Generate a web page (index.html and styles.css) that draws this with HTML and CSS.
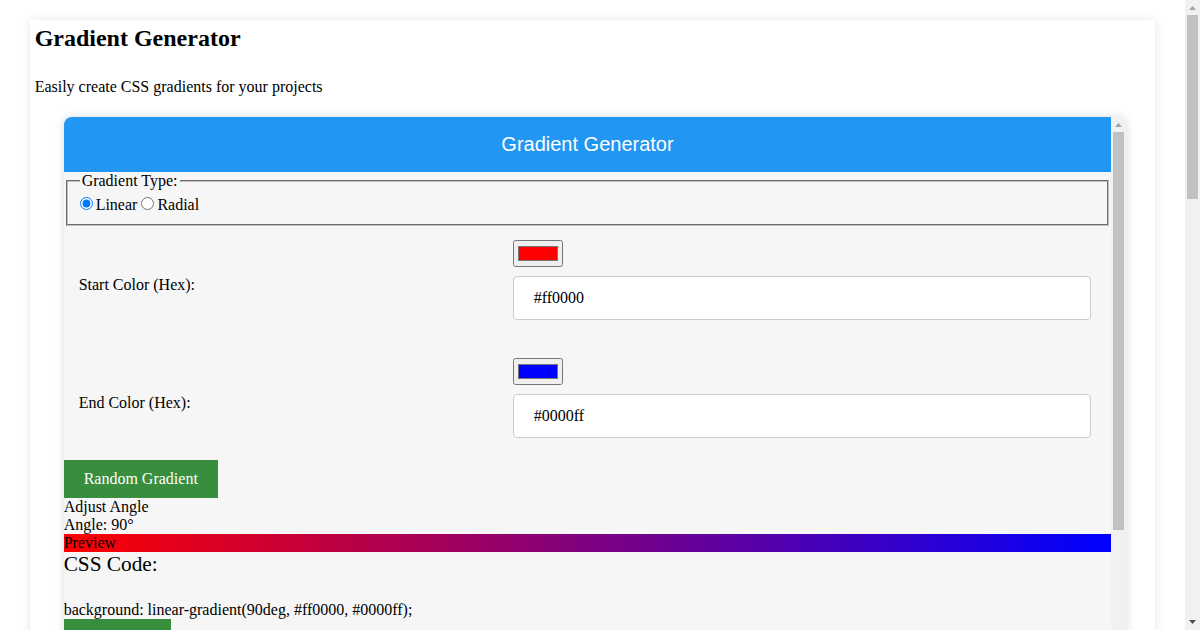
FILE: index.html
```html
<!DOCTYPE html>
<html lang="en">
<head>
<meta charset="utf-8">
<title>Gradient Generator</title>
<link rel="stylesheet" href="styles.css">
</head>
<body>
<div class="window">
  <div class="viewport">
    <div class="page">
      <h2 class="page-title">Gradient Generator</h2>
      <p class="intro">Easily create CSS gradients for your projects</p>

      <div class="app">
        <div class="app-body">
          <div class="app-header">Gradient Generator</div>

          <fieldset class="type-group">
            <legend>Gradient Type:</legend>
            <input type="radio" name="gtype" id="linear" class="radio" checked><label for="linear">Linear</label>
            <input type="radio" name="gtype" id="radial" class="radio"><label for="radial">Radial</label>
          </fieldset>

          <div class="color-row">
            <label class="color-label" for="start-hex">Start Color (Hex):</label>
            <div class="color-inputs">
              <input type="color" class="swatch" value="#ff0000">
              <input type="text" id="start-hex" class="hex-input" value="#ff0000">
            </div>
          </div>

          <div class="color-row">
            <label class="color-label" for="end-hex">End Color (Hex):</label>
            <div class="color-inputs">
              <input type="color" class="swatch" value="#0000ff">
              <input type="text" id="end-hex" class="hex-input" value="#0000ff">
            </div>
          </div>

          <button class="btn">Random Gradient</button>
          <div class="line">Adjust Angle</div>
          <div class="line">Angle: 90°</div>
          <div class="preview" style="background: linear-gradient(90deg, #ff0000, #0000ff);">Preview</div>
          <div class="code-title">CSS Code:</div>
          <p class="code">background: linear-gradient(90deg, #ff0000, #0000ff);</p>
          <button class="btn">Copy CSS</button>
          <div class="code-title saved-title">Saved Gradients:</div>
          <p class="saved-empty">No saved gradients yet.</p>
        </div>

        <div class="vscroll app-scroll" aria-hidden="true">
          <div class="vscroll-btn">
            <svg width="15" height="15" viewBox="0 0 15 15"><polygon points="4,10 11,10 7.5,6" fill="#a3a3a3"/></svg>
          </div>
          <div class="vscroll-track"><div class="vscroll-thumb"></div></div>
        </div>
      </div>

      <section class="guide">
        <h3>How to use</h3>
        <p>Pick a gradient type, choose a start and an end colour, adjust the angle and copy the generated CSS into your stylesheet.</p>
        <h3>About CSS gradients</h3>
        <p>CSS gradients let you display smooth transitions between two or more specified colours without using images.</p>
      </section>
    </div>
  </div>

  <div class="vscroll page-scroll" aria-hidden="true">
    <div class="vscroll-btn">
      <svg width="15" height="15" viewBox="0 0 15 15"><polygon points="4,10 11,10 7.5,6" fill="#a3a3a3"/></svg>
    </div>
    <div class="vscroll-track"><div class="vscroll-thumb"></div></div>
    <div class="vscroll-btn">
      <svg width="15" height="15" viewBox="0 0 15 15"><polygon points="4,5 11,5 7.5,9" fill="#505050"/></svg>
    </div>
  </div>
</div>
</body>
</html>
```

FILE: styles.css
```css
html, body {
  margin: 0;
  padding: 0;
  background: #ffffff;
}

body {
  font-family: "Liberation Serif", "Times New Roman", serif;
  font-size: 16px;
  color: #000;
}

.window {
  display: flex;
  height: 100vh;
  overflow: hidden;
}

.viewport {
  flex: 1;
  min-width: 0;
  height: 100vh;
  overflow: hidden;
}

/* drawn classic scrollbars */
.vscroll {
  flex: 0 0 15px;
  width: 15px;
  display: flex;
  flex-direction: column;
  background: #f1f1f1;
}

.vscroll-btn {
  height: 15px;
  flex: 0 0 15px;
}

.vscroll-btn svg {
  display: block;
}

.vscroll-track {
  flex: 1;
}

.vscroll-thumb {
  margin: 0 2px;
  background: #c1c1c1;
}

.page-scroll .vscroll-thumb {
  height: 184px;
}

.app-scroll .vscroll-thumb {
  height: 398px;
}

.page {
  width: 95%;
  margin: 20px auto;
  padding: 5px 5px 5px;
  box-sizing: border-box;
  background: #fff;
  box-shadow: 0 0 10px rgba(0, 0, 0, 0.1);
}

.page-title {
  font-size: 24px;
  font-weight: bold;
  margin: 0 0 26px;
}

.intro {
  margin: 0;
}

.app {
  display: flex;
  margin: 21px 24px 0 29px;
  height: 560px;
  overflow: hidden;
  background: #f6f6f6;
  border-radius: 8px;
  box-shadow: 0 0 10px rgba(0, 0, 0, 0.15);
}

.app-body {
  flex: 1;
  min-width: 0;
  overflow: hidden;
}

.app-header {
  background: #2196f3;
  color: #fff;
  font-family: "Liberation Sans", Arial, sans-serif;
  font-size: 20px;
  text-align: center;
  padding: 16px;
}

.type-group {
  margin: 0 2px;
  padding: 3.6px 12px 10px;
  border: 2px groove #c0c0c0;
}

.type-group legend {
  padding: 0 2px;
}

.radio {
  margin: 3px 3px 0 0;
}

.color-row {
  display: grid;
  grid-template-columns: 434px 578px;
  align-items: center;
  padding: 14px 15px;
  margin-bottom: 10px;
}

.color-row + .color-row {
  margin-bottom: 8px;
}

.color-label {
  margin-top: 10px;
}

.color-inputs {
  display: flex;
  flex-direction: column;
  gap: 9px;
}

.swatch {
  align-self: flex-start;
}

.hex-input {
  font: inherit;
  padding: 12px 20px;
  border: 1px solid #ccc;
  border-radius: 4px;
  background: #fff;
  box-sizing: border-box;
  width: 100%;
}

.btn {
  display: block;
  font: inherit;
  color: #fff;
  background: #388e3c;
  border: none;
  padding: 10px 20px;
}

.preview {
  color: #000;
}

.code-title {
  font-size: 21.3px;
}

.code {
  margin: 24px 0 0;
}

.saved-title {
  margin-top: 20px;
}

.saved-empty {
  margin: 10px 0 0;
  padding-bottom: 20px;
}

.guide {
  padding-top: 10px;
}
```
